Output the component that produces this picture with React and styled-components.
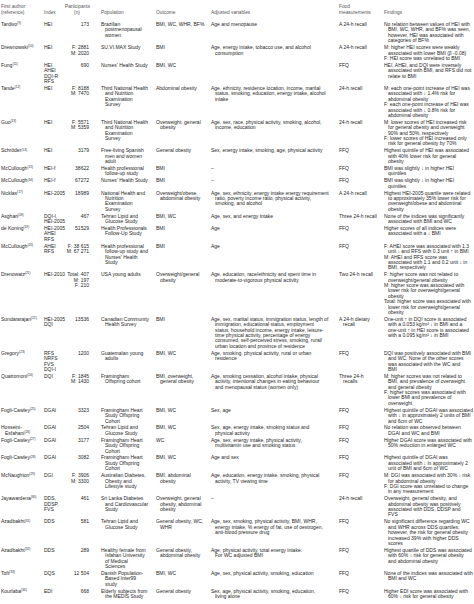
import React from "react";
import styled, { createGlobalStyle } from "styled-components";

const GlobalStyle = createGlobalStyle`
  html, body {
    margin: 0;
    padding: 0;
    background: #ffffff;
    overflow: hidden;
  }
`;

// the table is laid out at S times its size and scaled down, so the tiny
// type keeps exact fractional metrics
const S = 4;
const u = (v) => `${v * S}px`;

// table data: each cell is a list of paragraphs, "\n" marks a wrapped line
const rows = [
  { author: "Tardivo", ref: 9, index: ["HEI"], n: ["173"], pop: ["Brazilian\npostmenopausal\nwomen"], out: ["BMI, WC, WHR, BF%"], adj: ["Age and menopause"], food: ["A 24-h recall"], find: ["No relation between values of HEI with\nBMI, WC, WHR, and BF% was seen,\nhowever, HEI was associated with\ncategories of BF%"] },
  { author: "Drewnowski", ref: 10, index: ["HEI"], n: ["F: 2881", "M: 2020"], pop: ["SU.VI.MAX Study"], out: ["BMI"], adj: ["Age, energy intake, tobacco use, and alcohol\nconsumption"], food: ["A 24-h recall"], find: ["M: higher HEI scores were weakly\nassociated with lower BMI (β -0.08)", "F: HEI score was unrelated to BMI"] },
  { author: "Fung", ref: 11, index: ["HEI", "AHEI", "DQI-R", "RFS"], n: ["690"], pop: ["Nurses' Health Study"], out: ["BMI, WC"], adj: [""], food: ["FFQ"], find: ["HEI, AHEI, and DQI were inversely\nassociated with BMI, and RFS did not\nrelate to BMI"] },
  { author: "Tande", ref: 12, index: ["HEI"], n: ["F: 8188", "M: 7470"], pop: ["Third National Health\nand Nutrition\nExamination\nSurvey"], out: ["Abdominal obesity"], adj: ["Age, ethnicity, residence location, income, marital\nstatus, smoking, education, energy intake, alcohol\nintake"], food: ["24-h recall"], find: ["M: each one-point increase of HEI was\nassociated with ↓ 1.4% risk for\nabdominal obesity", "F: each one-point increase of HEI was\nassociated with ↓ 0.8% risk for\nabdominal obesity"] },
  { author: "Guo", ref: 13, index: ["HEI"], n: ["F: 5571", "M: 5359"], pop: ["Third National Health\nand Nutrition\nExamination\nSurvey"], out: ["Overweight, general\nobesity"], adj: ["Age, sex, race, physical activity, smoking, alcohol,\nincome, education"], food: ["24-h recall"], find: ["M: lower scores of HEI increased risk\nfor general obesity and overweight\n90% and 50%, respectively", "F: lower scores of HEI increased only\nrisk for general obesity by 70%"] },
  { author: "Schröder", ref: 14, index: ["HEI"], n: ["3179"], pop: ["Free-living Spanish\nmen and women\nadult"], out: ["General obesity"], adj: ["Sex, energy intake, smoking, age, physical activity"], food: ["FFQ"], find: ["Highest quintile of HEI was associated\nwith 40% lower risk for general\nobesity"] },
  { author: "McCullough", ref: 15, index: ["HEI-f"], n: ["38622"], pop: ["Health professional\nfollow-up study"], out: ["BMI"], adj: ["–"], food: ["FFQ"], find: ["BMI was slightly ↓ in higher HEI\nquintiles"] },
  { author: "McCullough", ref: 16, index: ["HEI-f"], n: ["67272"], pop: ["Nurses' Health Study"], out: ["BMI"], adj: ["–"], food: ["FFQ"], find: ["BMI was slightly ↓ in higher HEI\nquintiles"] },
  { author: "Nicklas", ref: 17, index: ["HEI-2005"], n: ["18989"], pop: ["National Health and\nNutrition\nExamination\nSurvey"], out: ["Overweight/obese,\nabdominal obesity"], adj: ["Age, sex, ethnicity, energy intake energy requirement\nratio, poverty income ratio, physical activity,\nsmoking, and alcohol"], food: ["A 24-h recall"], find: ["Highest HEI-2005 quartile were related\nto approximately 35% lower risk for\noverweight/obese and abdominal\nobesity"] },
  { author: "Asghari", ref: 18, index: ["DQI-I,", "HEI-2005"], n: ["467"], pop: ["Tehran Lipid and\nGlucose Study"], out: ["BMI, WC"], adj: ["Age, sex, and energy intake"], food: ["Three 24-h recall"], find: ["None of the indices was significantly\nassociated with BMI and WC"] },
  { author: "de Koning", ref: 19, index: ["HEI-2005", "AHEI", "RFS"], n: ["51529"], pop: ["Health Professionals\nFollow-Up Study"], out: ["BMI"], adj: ["Age"], food: ["FFQ"], find: ["Higher scores of all indices were\nassociated with a ↓ BMI"] },
  { author: "McCullough", ref: 20, index: ["AHEI", "RFS"], n: ["F: 38 615", "M: 67 271"], pop: ["Health professional\nfollow-up study and\nNurses' Health\nStudy"], out: ["BMI"], adj: ["Age"], food: ["FFQ"], find: ["F: AHEI score was associated with 1.3\nunit ↓ and RFS with 0.3 unit ↑ in BMI", "M: AHEI and RFS score was\nassociated with 1.1 and 0.2 unit ↓ in\nBMI, respectively"] },
  { author: "Drenowatz", ref: 21, index: ["HEI-2010"], n: ["Total: 407", "M: 197", "F: 210"], pop: ["USA young adults"], out: ["Overweight/general\nobesity"], adj: ["Age, education, race/ethnicity and spent time in\nmoderate-to-vigorous physical activity"], food: ["Two 24-h recall"], find: ["F: higher score was not related to\noverweight/general obesity", "M: higher score was associated with\nlower risk for overweight/general\nobesity", "Total: higher score was associated with\nlower risk for overweight/general\nobesity"] },
  { author: "Sundararajan", ref: 22, index: ["HEI-2005", "DQI"], n: ["13536"], pop: ["Canadian Community\nHealth Survey"], out: ["BMI"], adj: ["Age, sex, marital status, immigration status, length of\nimmigration, educational status, employment\nstatus, household income, energy intake, leisure-\ntime physical activity, percentage of energy\nconsumed, self-perceived stress, smoking, rural/\nurban location and province of residence"], food: ["A 24-h dietary\nrecall"], find: ["One-unit ↑ in DQI score is associated\nwith a 0.053 kg/m² ↓ in BMI and a\none-unit ↑ in HEI score is associated\nwith a 0.095 kg/m² ↓ in BMI"] },
  { author: "Gregory", ref: 23, index: ["RFS", "NRFS", "FVS", "DQI-I"], n: ["1200"], pop: ["Guatemalan young\nadults"], out: ["BMI, WC"], adj: ["Age, smoking, physical activity, rural or urban\nresidence"], food: ["FFQ"], find: ["DQI was positively associated with BMI\nand WC. None of the other scores\nwas associated with the WC and\nBMI"] },
  { author: "Quatromoni", ref: 24, index: ["DQI"], n: ["F: 1845", "M: 1430"], pop: ["Framingham\nOffspring cohort"], out: ["BMI, overweight,\ngeneral obesity"], adj: ["Age, smoking cessation, alcohol intake, physical\nactivity, intentional changes in eating behaviour\nand menopausal status (women only)"], food: ["Three 24-h\nrecalls"], find: ["M: higher scores was not related to\nBMI, and prevalence of overweight\nand general obesity", "F: higher scores was associated with\nlower BMI and prevalence of\noverweight"] },
  { author: "Fogli-Cawley", ref: 25, index: ["DGAI"], n: ["3323"], pop: ["Framingham Heart\nStudy Offspring\nCohort"], out: ["BMI, WC"], adj: ["Sex, age"], food: ["FFQ"], find: ["Highest quintile of DGAI was associated\nwith ↓ in approximately 2 units of BMI\nand 6cm of WC"] },
  { author: "Hosseini-\nEsfahani", ref: 26, index: ["DGAI"], n: ["2504"], pop: ["Tehran Lipid and\nGlucose Study"], out: ["BMI, WC"], adj: ["Sex, age, energy intake, smoking status and\nphysical activity"], food: ["FFQ"], find: ["No relation was observed between\nDGAI and WC and BMI"] },
  { author: "Fogli-Cawley", ref: 27, index: ["DGAI"], n: ["3177"], pop: ["Framingham Heart\nStudy Offspring\nCohort"], out: ["WC"], adj: ["Age, sex, energy intake, physical activity,\nmultivitamin use and smoking status"], food: ["FFQ"], find: ["Higher DGAI score was associated with\n50% reduction in enlarged WC"] },
  { author: "Fogli-Cawley", ref: 28, index: ["DGAI"], n: ["3082"], pop: ["Framingham Heart\nStudy Offspring\nCohort"], out: ["BMI, WC"], adj: ["Age and sex"], food: ["FFQ"], find: ["Highest quintile of DGAI was\nassociated with ↓ in approximately 2\nunit of BMI and 6cm of WC"] },
  { author: "McNaughton", ref: 29, index: ["DGI"], n: ["F: 3906", "M: 3300"], pop: ["Australian Diabetes,\nObesity and\nLifestyle study"], out: ["BMI, abdominal\nobesity"], adj: ["Age, education, energy intake, smoking, physical\nactivity, TV viewing time"], food: ["FFQ"], find: ["M: DGI was associated with 30% ↓ risk\nfor abdominal obesity", "F: DGI score was unrelated to change\nin any measurement"] },
  { author: "Jayawardena", ref: 30, index: ["DDS,", "DDSP,", "FVS"], n: ["461"], pop: ["Sri Lanka Diabetes\nand Cardiovascular\nStudy"], out: ["Overweight, general\nobesity, abdominal\nobesity"], adj: ["–"], food: ["24-h recall"], find: ["Overweight, general obesity, and\nabdominal obesity was positively\nassociated with DDS, DDSP and\nFVS"] },
  { author: "Azadbakht", ref: 31, index: ["DDS"], n: ["581"], pop: ["Tehran Lipid and\nGlucose Study"], out: ["General obesity, WC,\nWHR"], adj: ["Age, sex, smoking, physical activity, BMI, WHR,\nenergy intake, % energy of fat, use of oestrogen,\nanti-blood pressure drug"], food: ["FFQ"], find: ["No significant difference regarding WC\nand WHR across DDS quartiles;\nhowever, the risk for general obesity\nincreased 39% with higher DDS\nscores"] },
  { author: "Azadbakht", ref: 32, index: ["DDS"], n: ["289"], pop: ["Healthy female from\nIsfahan University\nof Medical\nSciences"], out: ["General obesity,\nabdominal obesity"], adj: ["Age, physical activity, total energy intake.\nFor WC adjusted BMI"], food: ["FFQ"], find: ["Highest quartile of DDS was associated\nwith 60% ↓ risk for general obesity\nand abdominal obesity"] },
  { author: "Toft", ref: 33, index: ["DQS"], n: ["12 504"], pop: ["Danish Population-\nBased Inter99\nstudy"], out: ["BMI, WC"], adj: ["Age, sex, physical activity, smoking, education"], food: ["FFQ"], find: ["None of the indices was associated with\nBMI and WC"] },
  { author: "Kourlaba", ref: 34, index: ["EDI"], n: ["668"], pop: ["Elderly subjects from\nthe MEDIS Study"], out: ["General obesity"], adj: ["Sex, age, physical activity, smoking, education,\nliving alone"], food: ["FFQ"], find: ["Higher EDI score was associated with\n60% ↓ risk for general obesity"] },
];

const Cell = ({ paras, right, pad }) => (
  <StCell $right={right} $pad={pad}>
    {paras.map((p, i) => (
      <StPara key={i} $right={right}>{p}</StPara>
    ))}
  </StCell>
);

const App = () => {
  return (
    <StPage>
      <GlobalStyle />
      <StTable>
        <StHead>
          <StHeadCell>First author{"\n"}(reference)</StHeadCell>
          <StHeadCell>Index</StHeadCell>
          <StHeadCell $center>Participants{"\n"}(n)</StHeadCell>
          <StHeadCell $pad>Population</StHeadCell>
          <StHeadCell>Outcome</StHeadCell>
          <StHeadCell>Adjusted variables</StHeadCell>
          <StHeadCell>Food{"\n"}measurements</StHeadCell>
          <StHeadCell>Findings</StHeadCell>
        </StHead>
        {rows.map((r, i) => (
          <StRow key={i}>
            <StCell>
              <StPara>
                {r.author}
                <StRef>({r.ref})</StRef>
              </StPara>
            </StCell>
            <Cell paras={r.index} />
            <Cell paras={r.n} right />
            <Cell paras={r.pop} pad />
            <Cell paras={r.out} />
            <Cell paras={r.adj} />
            <Cell paras={r.food} />
            <Cell paras={r.find} />
          </StRow>
        ))}
      </StTable>
    </StPage>
  );
};

/* STYLED-COMPONENTS */

const COLS = [43, 21, 24, 67, 55, 128, 45, 110].map(u).join(" ");

const StPage = styled.div`
  width: 474px;
  height: 604px;
  overflow: hidden;
  background: #ffffff;
`;

const StTable = styled.div`
  width: ${u(493)};
  padding: ${u(4)} 0 0 ${u(1)};
  transform: scale(${1 / S});
  transform-origin: 0 0;
  font-family: "Liberation Sans", Arial, sans-serif;
  font-size: ${u(5)};
  line-height: ${u(5.4)};
  color: #262626;
`;

const StHead = styled.div`
  display: grid;
  grid-template-columns: ${COLS};
  align-items: end;
  padding-bottom: ${u(3.5)};
  font-size: ${u(4.8)};
  color: #555555;
`;

const StHeadCell = styled.div`
  white-space: pre;
  text-align: ${(p) => (p.$center ? "center" : "left")};
  padding-left: ${(p) => (p.$pad ? u(12) : "0")};
`;

const StRow = styled.div`
  display: grid;
  grid-template-columns: ${COLS};
  align-items: start;
  padding: ${u(0.75)} 0;
  &:nth-child(2) {
    padding-top: ${u(3.4)};
  }
`;

const StCell = styled.div`
  min-width: 0;
  text-align: ${(p) => (p.$right ? "right" : "left")};
  padding-left: ${(p) => (p.$pad ? u(12) : "0")};
`;

const StPara = styled.div`
  white-space: pre;
  padding-left: ${(p) => (p.$right ? "0" : u(4))};
  text-indent: ${(p) => (p.$right ? "0" : u(-4))};
`;

const StRef = styled.sup`
  font-size: ${u(3.2)};
  line-height: 0;
  vertical-align: ${u(1.7)};
`;

export default App;
